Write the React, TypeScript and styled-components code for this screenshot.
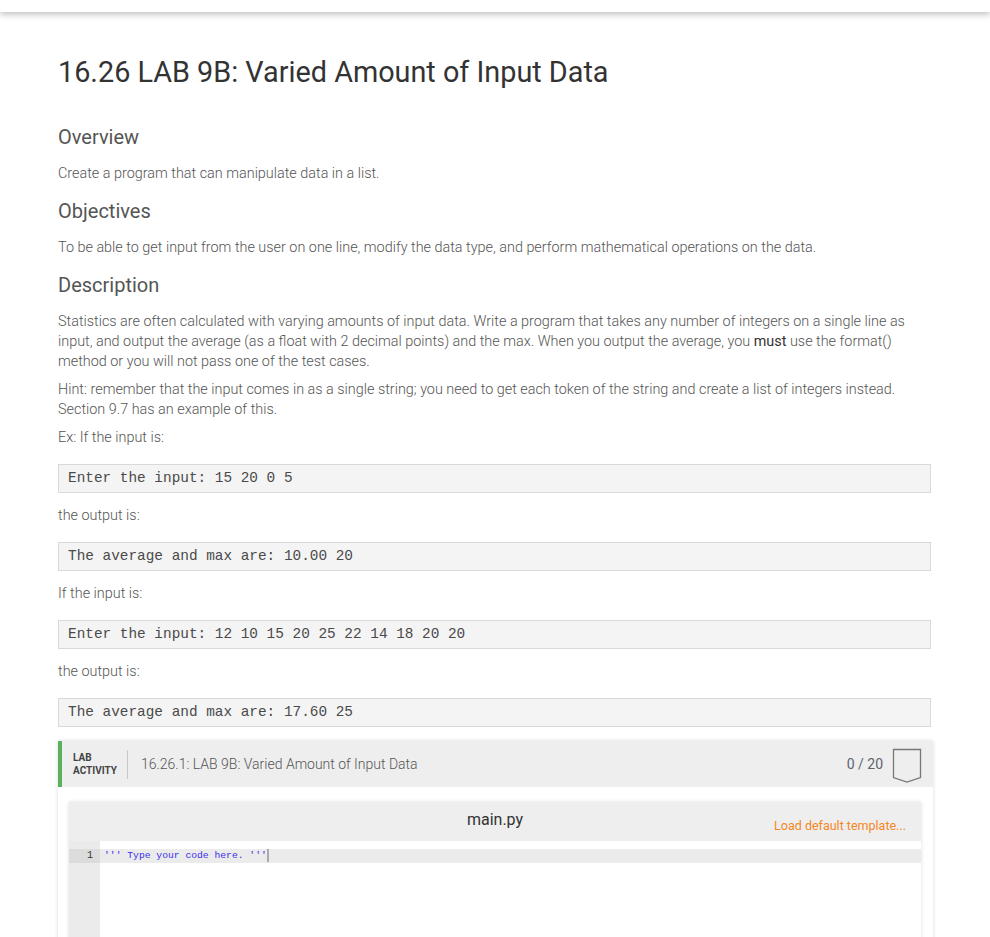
import styled, { createGlobalStyle } from "styled-components";

const GlobalStyle = createGlobalStyle`
    body {
        margin: 0;
        background: #ffffff;
        font-family: Roboto, "Liberation Sans", sans-serif;
        color: #555;
    }
`;

const TopBar = styled.div`
    height: 12px;
    background: #fff;
    box-shadow: 0 2px 7px rgba(0, 0, 0, 0.28);
`;

const Page = styled.main`
    width: 873px;
    margin: 0 0 0 58px;
    padding-top: 39px;
`;

const Title = styled.h1`
    margin: 0 0 30px;
    font-size: 28.8px;
    line-height: 42px;
    font-weight: 400;
    color: #333;
`;

const Heading = styled.h3`
    margin: 13px 0;
    font-size: 20px;
    line-height: 28px;
    font-weight: 400;
    color: #555;
`;

const Para = styled.p`
    margin: 8px 0;
    font-size: 14.4px;
    line-height: 20px;
    font-weight: 300;
    color: #555;

    strong {
        font-weight: 400;
        color: #333;
    }
`;

const CodeBox = styled.pre`
    margin: 16px 0 13px;
    padding: 0 9px;
    height: 27px;
    line-height: 27px;
    background: #f4f4f4;
    border: 1px solid #d9d9d9;
    font-family: "Liberation Mono", "Courier New", monospace;
    font-size: 14.4px;
    color: #4a4a4a;
`;

const LabCard = styled.section`
    margin-top: 14px;
    width: 875px;
    background: #fff;
    box-shadow: 0 0 4px rgba(0, 0, 0, 0.15);
`;

const LabHeader = styled.header`
    display: flex;
    align-items: center;
    height: 46px;
    background: #eee;
    border-left: 4px solid #5bb15b;
    padding: 0 11px 0 11px;
`;

const LabTag = styled.div`
    font-size: 10px;
    line-height: 13px;
    font-weight: 700;
    color: #444;
    padding-right: 10px;
    border-right: 1px solid #c8c8c8;
    height: 29px;
    display: flex;
    flex-direction: column;
    justify-content: center;
`;

const LabTitle = styled.div`
    flex: 1;
    margin-left: 13px;
    font-size: 14px;
    font-weight: 300;
    color: #555;
`;

const Score = styled.span`
    font-size: 14px;
    color: #5b6470;
    margin-right: 9px;
`;

const Badge = styled.svg`
    display: block;
    width: 30px;
    height: 36px;
    margin-top: 4px;
`;

const LabBody = styled.div`
    padding: 15px 12px 0 11px;
`;

const Editor = styled.div`
    box-shadow: 0 0 4px rgba(0, 0, 0, 0.14);
`;

const EditorBar = styled.div`
    position: relative;
    height: 39px;
    background: #eee;
    display: flex;
    justify-content: center;
`;

const FileName = styled.span`
    font-size: 16px;
    line-height: 36px;
    color: #333;
`;

const TemplateLink = styled.a`
    position: absolute;
    right: 15px;
    top: 16px;
    font-size: 12.5px;
    color: #f5861f;
    text-decoration: none;
`;

const EditorArea = styled.div`
    display: flex;
    height: 120px;
    background: #fff;
`;

const Gutter = styled.div`
    width: 31px;
    background: #ebebeb;
    padding-top: 8px;
`;

const GutterCell = styled.div`
    height: 14px;
    line-height: 14px;
    background: #dcdcdc;
    text-align: right;
    padding-right: 7px;
    font-family: "Liberation Mono", monospace;
    font-size: 10px;
    color: #333;
`;

const Lines = styled.div`
    flex: 1;
    padding-top: 8px;
`;

const ActiveLine = styled.div`
    height: 14px;
    line-height: 14px;
    background: #ebebeb;
    padding-left: 4px;
    font-family: "Liberation Mono", monospace;
    font-size: 9.7px;
    color: #3a2cf0;
    white-space: pre;
`;

const Caret = styled.span`
    display: inline-block;
    width: 2px;
    height: 13px;
    vertical-align: middle;
    background: #aaa;
`;

export default function App() {
    return (
        <>
            <GlobalStyle />
            <TopBar />
            <Page>
                <Title>16.26 LAB 9B: Varied Amount of Input Data</Title>

                <Heading>Overview</Heading>
                <Para>Create a program that can manipulate data in a list.</Para>

                <Heading>Objectives</Heading>
                <Para>To be able to get input from the user on one line, modify the data type, and perform mathematical operations on the data.</Para>

                <Heading>Description</Heading>
                <Para>
                    Statistics are often calculated with varying amounts of input data. Write a program that takes any number of integers on a single line as input, and output the average (as a float with 2 decimal points) and the max. When you output the average, you <strong>must</strong> use the format() method or you will not pass one of the test cases.
                </Para>
                <Para>
                    Hint: remember that the input comes in as a single string; you need to get each token of the string and create a list of integers instead. Section 9.7 has an example of this.
                </Para>
                <Para>Ex: If the input is:</Para>
                <CodeBox>Enter the input: 15 20 0 5</CodeBox>
                <Para>the output is:</Para>
                <CodeBox>The average and max are: 10.00 20</CodeBox>
                <Para>If the input is:</Para>
                <CodeBox>Enter the input: 12 10 15 20 25 22 14 18 20 20</CodeBox>
                <Para>the output is:</Para>
                <CodeBox>The average and max are: 17.60 25</CodeBox>

                <LabCard>
                    <LabHeader>
                        <LabTag>
                            <span>LAB</span>
                            <span>ACTIVITY</span>
                        </LabTag>
                        <LabTitle>16.26.1: LAB 9B: Varied Amount of Input Data</LabTitle>
                        <Score>0 / 20</Score>
                        <Badge viewBox="0 0 30 36">
                            <path d="M1.5 1.5 H28.5 V29.5 L15 34 L1.5 29.5 Z" fill="none" stroke="#777" strokeWidth="1.3" />
                        </Badge>
                    </LabHeader>
                    <LabBody>
                        <Editor>
                            <EditorBar>
                                <FileName>main.py</FileName>
                                <TemplateLink href="#">Load default template...</TemplateLink>
                            </EditorBar>
                            <EditorArea>
                                <Gutter>
                                    <GutterCell>1</GutterCell>
                                </Gutter>
                                <Lines>
                                    <ActiveLine>''' Type your code here. '''<Caret /></ActiveLine>
                                </Lines>
                            </EditorArea>
                        </Editor>
                    </LabBody>
                </LabCard>
            </Page>
        </>
    );
}
